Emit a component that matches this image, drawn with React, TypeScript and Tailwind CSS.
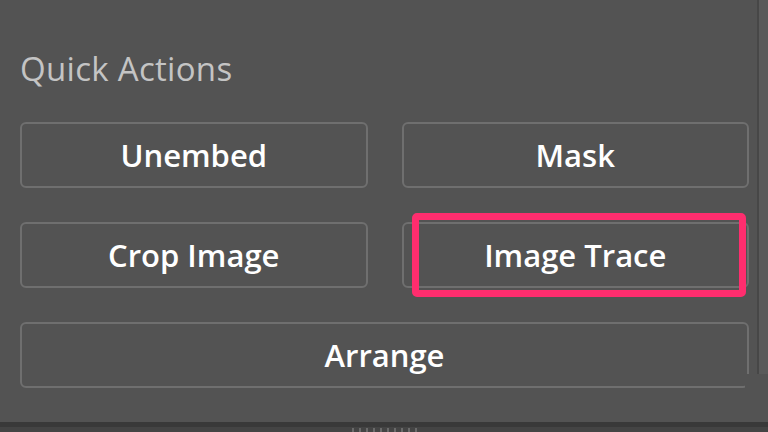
import React from "react";

const font = { fontFamily: '"Open Sans", "Noto Sans", sans-serif' };

const ActionButton = ({ label, wide }: { label: string; wide?: boolean }) => (
  <button
    className={`h-[66px] w-full rounded-[6px] border-2 border-[#6f6f6f] bg-[#535353] text-[31px] font-semibold text-white leading-none ${
      wide ? "col-span-2" : ""
    }`}
  >
    {label}
  </button>
);

export default function App() {
  return (
    <div className="flex h-[432px] w-[768px] flex-col overflow-hidden bg-[#535353]" style={font}>
      <div className="relative flex h-[422px] w-full">
        <div className="flex-1 pl-[20px] pr-[8px] pt-[48px]">
          <h2 className="text-[33px] leading-[42px] text-[#c4c4c4] tracking-[0.3px]">Quick Actions</h2>
          <div className="mt-[32px] grid grid-cols-2 gap-x-[34px] gap-y-[34px]">
            <ActionButton label="Unembed" />
            <ActionButton label="Mask" />
            <ActionButton label="Crop Image" />
            <div className="relative flex">
              <ActionButton label="Image Trace" />
              <div className="pointer-events-none absolute left-[10px] right-[3px] top-[-9px] bottom-[-9px] rounded-[5px] border-[7px] border-[#ff2d6e]" />
            </div>
            <ActionButton label="Arrange" wide />
          </div>
        </div>
        <div className="flex w-[11px] flex-col">
          <div className="flex h-[374px]">
            <div className="w-[2px] bg-[#474747]" />
            <div className="flex-1 bg-[#5a5a5a]" />
          </div>
        </div>
        <div className="absolute left-[745px] top-[374px] h-[48px] w-[23px] bg-[#535353]" />
      </div>
      <div className="flex flex-1 flex-col">
        <div className="h-[5px] bg-[#393939]" />
        <div className="flex flex-1 justify-center gap-[5px] bg-[#444444] pt-[1px]">
          {Array.from({ length: 10 }).map((_, i) => (
            <div key={i} className="h-[4px] w-[2px] bg-[#6a6a6a]" />
          ))}
        </div>
      </div>
    </div>
  );
}
